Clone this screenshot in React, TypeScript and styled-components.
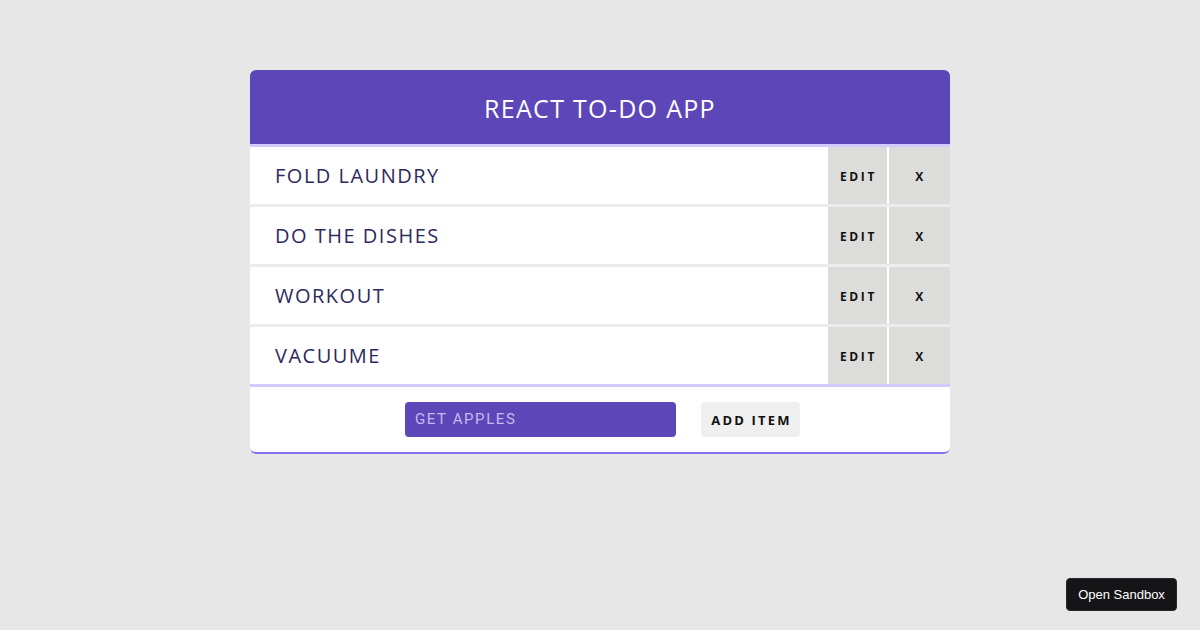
import React from "react";
import styled, { createGlobalStyle } from "styled-components";

const Global = createGlobalStyle`
  html, body { margin: 0; padding: 0; background: #e7e7e7; }
  body { font-family: "Open Sans", sans-serif; }
  * { box-sizing: border-box; }
`;

const Page = styled.div`
  width: 1200px;
  height: 630px;
  display: flex;
  justify-content: center;
  align-items: flex-start;
  padding-top: 70px;
  position: relative;
`;

const Card = styled.div`
  width: 700px;
  display: flex;
  flex-direction: column;
  border-radius: 6px;
  overflow: hidden;
  background: #ececec;
`;

const Header = styled.header`
  height: 77px;
  background: #5c46b8;
  border-bottom: 3px solid #d3c9ff;
  display: flex;
  align-items: center;
  justify-content: center;
  color: #ffffff;
  font-family: "Open Sans", sans-serif;
  font-size: 25px;
  letter-spacing: 1.3px;
  padding-top: 1px;
`;

const List = styled.ul`
  list-style: none;
  margin: 0;
  padding: 0;
  display: flex;
  flex-direction: column;
  gap: 3px;
`;

const Row = styled.li`
  height: 57px;
  display: flex;
  background: #ffffff;
`;

const Label = styled.span`
  flex: 1;
  display: flex;
  align-items: center;
  padding-left: 25px;
  color: #2e2960;
  font-family: "Open Sans", sans-serif;
  font-size: 20px;
  letter-spacing: 1.5px;
`;

const ActionButton = styled.button<{ $w: number }>`
  width: ${(p) => p.$w}px;
  height: 100%;
  border: none;
  background: #dcdcda;
  color: #111111;
  font-family: "Open Sans", sans-serif;
  font-weight: 700;
  font-size: 12px;
  letter-spacing: 2.6px;
  padding: 2px 0 0 2px;
  margin-left: ${(p) => (p.$w === 61 ? "2px" : "0")};
  cursor: pointer;
`;

const Footer = styled.form`
  height: 70px;
  background: #ffffff;
  border-top: 3px solid #d3c9ff;
  border-bottom: 2px solid #8a6cf0;
  border-radius: 0 0 6px 6px;
  display: flex;
  align-items: center;
  justify-content: center;
  gap: 25px;
  padding: 0 0 1px 5px;
`;

const Input = styled.input`
  width: 271px;
  height: 35px;
  border: none;
  border-radius: 4px;
  background: #5c46b8;
  color: #ffffff;
  padding: 0 10px;
  font-family: Roboto, sans-serif;
  font-size: 15px;
  letter-spacing: 1.6px;
  outline: none;
  &::placeholder { color: #c4baf2; }
`;

const AddButton = styled.button`
  width: 99px;
  height: 35px;
  border: none;
  border-radius: 4px;
  background: #efefef;
  color: #111111;
  font-family: "Open Sans", sans-serif;
  font-weight: 700;
  font-size: 13px;
  letter-spacing: 2.2px;
  padding: 2px 0 0 2px;
`;

const SandboxButton = styled.a`
  position: absolute;
  right: 23px;
  bottom: 19px;
  width: 111px;
  height: 33px;
  display: flex;
  align-items: center;
  justify-content: center;
  background: #151417;
  color: #ffffff;
  border: 1px solid #2a282d;
  border-radius: 4px;
  font-family: "Liberation Sans", Arial, sans-serif;
  font-size: 13px;
  text-decoration: none;
`;

const items = ["FOLD LAUNDRY", "DO THE DISHES", "WORKOUT", "VACUUME"];

export default function App() {
  return (
    <>
      <Global />
      <Page>
        <Card>
          <Header>REACT TO-DO APP</Header>
          <List>
            {items.map((t) => (
              <Row key={t}>
                <Label>{t}</Label>
                <ActionButton $w={59}>EDIT</ActionButton>
                <ActionButton $w={61}>X</ActionButton>
              </Row>
            ))}
          </List>
          <Footer onSubmit={(e) => e.preventDefault()}>
            <Input placeholder="GET APPLES" />
            <AddButton type="submit">ADD ITEM</AddButton>
          </Footer>
        </Card>
        <SandboxButton href="#">Open Sandbox</SandboxButton>
      </Page>
    </>
  );
}
